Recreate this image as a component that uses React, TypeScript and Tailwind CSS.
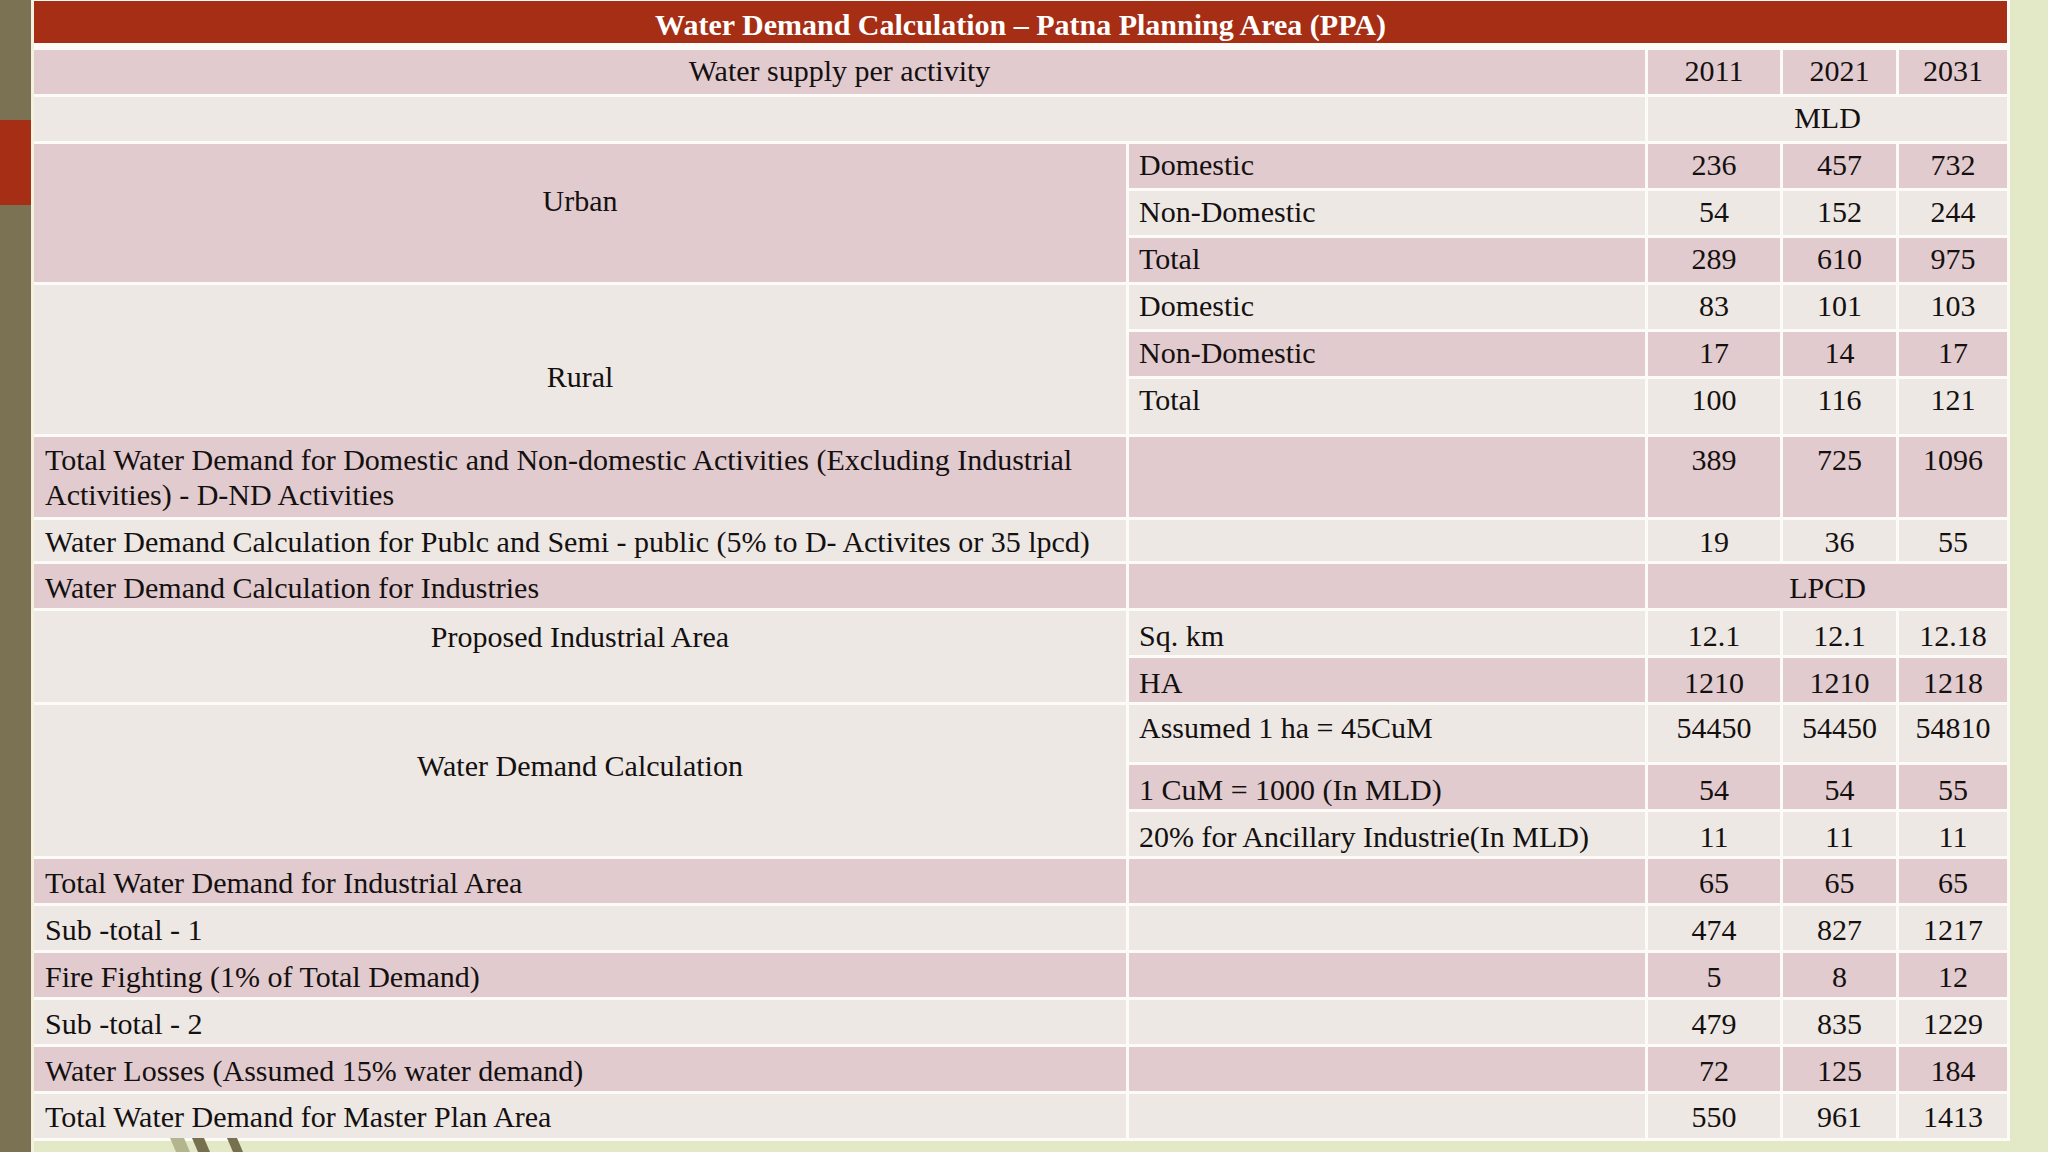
import React from 'react';

const pink = 'bg-[#e1cbce]';
const light = 'bg-[#ede8e4]';

const Num = ({ v, bg, pt }: { v: string; bg: string; pt: string }) => (
  <div className={`${bg} ${pt} text-center`}>{v}</div>
);

// upper part of the table sits a few px higher than the lower part
const nums = (vals: string[], bg: string, pt = 'pt-[3px]') =>
  vals.map((v, i) => <Num key={i} v={v} bg={bg} pt={pt} />);

const App = () => {
  return (
    <div
      className="relative flex h-[1152px] w-[2048px] overflow-hidden bg-[#e3e8c7] text-[30px] leading-[35px] text-[#141010]"
      style={{ fontFamily: '"Liberation Serif", "Times New Roman", serif' }}
    >
      {/* left accent bar */}
      <div className="flex w-[31px] flex-col bg-[#7a7253]">
        <div className="h-[120px]" />
        <div className="h-[85px] bg-[#a52e14]" />
      </div>
      <div className="w-[3px] bg-[#f4f1de]" />

      {/* slide bottom stripes */}
      <svg className="absolute left-[160px] top-[1138px]" width="100" height="14" viewBox="0 0 100 14">
        <polygon points="10,0 24,0 30,14 16,14" fill="#b3b58f" />
        <polygon points="32,0 44,0 50,14 38,14" fill="#77704f" />
        <polygon points="67,0 77,0 83,14 73,14" fill="#77704f" />
      </svg>

      <div className="flex w-[1976px] flex-col self-start bg-[#fcfbf7] pt-[1px] pb-[3px] pr-[3px]">
        <div className="flex h-[42px] items-center justify-center bg-[#a52e14] pt-[4px] text-[30px] font-bold text-white">
          Water Demand Calculation – Patna Planning Area (PPA)
        </div>
        <div className="mt-[7px] grid grid-cols-[1092px_516px_132px_113px_108px] grid-rows-[44px_44px_44px_44px_44px_44px_44px_55px_80px_41px_44px_44px_44px_57px_44px_44px_44px_44px_44px_44px_44px_44px] gap-[3px]">
          {/* header row */}
          <div className={`${pink} col-span-2 pt-[3px] text-center`}>Water supply per activity</div>
          {nums(['2011', '2021', '2031'], pink)}

          <div className={`${light} col-span-2`} />
          <div className={`${light} col-span-3 pt-[3px] text-center`}>MLD</div>

          {/* urban */}
          <div className={`${pink} row-span-3 pt-[39px] text-center`}>Urban</div>
          <div className={`${pink} pl-[10px] pt-[3px]`}>Domestic</div>
          {nums(['236', '457', '732'], pink)}
          <div className={`${light} pl-[10px] pt-[3px]`}>Non-Domestic</div>
          {nums(['54', '152', '244'], light)}
          <div className={`${pink} pl-[10px] pt-[3px]`}>Total</div>
          {nums(['289', '610', '975'], pink)}

          {/* rural */}
          <div className={`${light} row-span-3 pt-[74px] text-center`}>Rural</div>
          <div className={`${light} pl-[10px] pt-[3px]`}>Domestic</div>
          {nums(['83', '101', '103'], light)}
          <div className={`${pink} pl-[10px] pt-[3px]`}>Non-Domestic</div>
          {nums(['17', '14', '17'], pink)}
          <div className={`${light} pl-[10px] pt-[3px]`}>Total</div>
          {nums(['100', '116', '121'], light)}

          <div className={`${pink} pl-[11px] pt-[5px]`}>
            Total Water Demand for Domestic and Non-domestic Activities (Excluding Industrial
            <br />
            Activities) - D-ND Activities
          </div>
          <div className={pink} />
          {nums(['389', '725', '1096'], pink, 'pt-[5px]')}

          <div className={`${light} pl-[11px] pt-[4px]`}>
            Water Demand Calculation for Publc and Semi - public (5% to D- Activites or 35 lpcd)
          </div>
          <div className={light} />
          {nums(['19', '36', '55'], light, 'pt-[4px]')}

          <div className={`${pink} pl-[11px] pt-[6px]`}>Water Demand Calculation for Industries</div>
          <div className={pink} />
          <div className={`${pink} col-span-3 pt-[6px] text-center`}>LPCD</div>

          {/* industrial area */}
          <div className={`${light} row-span-2 pt-[8px] text-center`}>Proposed Industrial Area</div>
          <div className={`${light} pl-[10px] pt-[7px]`}>Sq. km</div>
          {nums(['12.1', '12.1', '12.18'], light, 'pt-[7px]')}
          <div className={`${pink} pl-[10px] pt-[7px]`}>HA</div>
          {nums(['1210', '1210', '1218'], pink, 'pt-[7px]')}

          <div className={`${light} row-span-3 pt-[43px] text-center`}>Water Demand Calculation</div>
          <div className={`${light} pl-[10px] pt-[5px]`}>Assumed 1 ha = 45CuM</div>
          {nums(['54450', '54450', '54810'], light, 'pt-[5px]')}
          <div className={`${pink} pl-[10px] pt-[7px]`}>1 CuM = 1000 (In MLD)</div>
          {nums(['54', '54', '55'], pink, 'pt-[7px]')}
          <div className={`${light} pl-[10px] pt-[7px]`}>20% for Ancillary Industrie(In MLD)</div>
          {nums(['11', '11', '11'], light, 'pt-[7px]')}

          <div className={`${pink} pl-[11px] pt-[6px]`}>Total Water Demand for Industrial Area</div>
          <div className={pink} />
          {nums(['65', '65', '65'], pink, 'pt-[6px]')}

          <div className={`${light} pl-[11px] pt-[6px]`}>Sub -total - 1</div>
          <div className={light} />
          {nums(['474', '827', '1217'], light, 'pt-[6px]')}

          <div className={`${pink} pl-[11px] pt-[6px]`}>Fire Fighting (1% of Total Demand)</div>
          <div className={pink} />
          {nums(['5', '8', '12'], pink, 'pt-[6px]')}

          <div className={`${light} pl-[11px] pt-[6px]`}>Sub -total - 2</div>
          <div className={light} />
          {nums(['479', '835', '1229'], light, 'pt-[6px]')}

          <div className={`${pink} pl-[11px] pt-[6px]`}>Water Losses (Assumed 15% water demand)</div>
          <div className={pink} />
          {nums(['72', '125', '184'], pink, 'pt-[6px]')}

          <div className={`${light} pl-[11px] pt-[5px]`}>Total Water Demand for Master Plan Area</div>
          <div className={light} />
          {nums(['550', '961', '1413'], light, 'pt-[5px]')}
        </div>
      </div>
    </div>
  );
};

export default App;
